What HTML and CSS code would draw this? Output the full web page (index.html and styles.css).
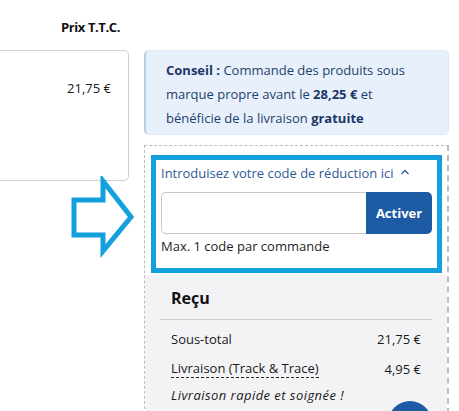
FILE: index.html
```html
<!DOCTYPE html>
<html lang="fr">
<head>
<meta charset="utf-8">
<link rel="stylesheet" href="styles.css">
</head>
<body>
<div class="page">
  <div class="cart">
    <div class="cart-head">Prix T.T.C.</div>
    <div class="cart-card">
      <div class="price">21,75 €</div>
    </div>
  </div>
  <div class="side">
    <div class="tip">
      <p class="tip-text"><b>Conseil :</b> Commande des produits sous<br>marque propre avant le <b>28,25&nbsp;€</b> et<br>bénéficie de la livraison <b>gratuite</b></p>
    </div>
    <div class="summary">
      <div class="discount">
        <div class="highlight">
          <div class="toggle">Introduisez votre code de réduction ici
            <svg class="chev" width="10" height="6" viewBox="0 0 10 6"><path d="M1.5 5 L5 1.5 L8.5 5" fill="none" stroke="#2d5c95" stroke-width="1.3"/></svg>
          </div>
          <div class="code-row">
            <input class="code-input" type="text" aria-label="code">
            <button class="code-btn">Activer</button>
          </div>
          <div class="hint">Max. 1 code par commande</div>
        </div>
      </div>
      <div class="receipt">
        <div class="receipt-title">Reçu</div>
        <div class="row"><span>Sous-total</span><span>21,75 €</span></div>
        <div class="row row-ship"><span class="dotted">Livraison (Track &amp; Trace)</span><span>4,95 €</span></div>
        <div class="note">Livraison rapide et soignée !</div>
        <div class="circle-wrap"><div class="circle"></div></div>
      </div>
    </div>
  </div>
  <svg class="arrow" width="72" height="84" viewBox="0 0 72 84">
    <path d="M6 24 L35 24 L35 5 L63 41 L35 75 L35 59 L6 59 Z" fill="none" stroke="#13a0dc" stroke-width="5" stroke-linejoin="miter"/>
  </svg>
</div>
</body>
</html>
```
FILE: styles.css
```css
html, body {
  margin: 0;
  padding: 0;
  background: #fff;
  font-family: "Open Sans", "Noto Sans", sans-serif;
  color: #1a1a1a;
  overflow: hidden;
}
.page {
  position: relative;
  display: flex;
  gap: 15px;
  width: 459px;
  height: 411px;
  overflow: hidden;
}
.cart {
  width: 129px;
  flex: none;
}
.cart-head {
  height: 50px;
  box-sizing: border-box;
  padding: 18px 9px 0 0;
  text-align: right;
  font-weight: 700;
  font-size: 13px;
  letter-spacing: -0.4px;
  line-height: 18px;
  color: #111;
}
.cart-card {
  height: 131px;
  box-sizing: border-box;
  border: 1px solid #cfcfcf;
  border-left: none;
  border-radius: 0 5px 5px 0;
  padding: 28px 17px 0 0;
  text-align: right;
  font-size: 13px;
  line-height: 18px;
}
.side {
  width: 305px;
  flex: none;
  padding-top: 50px;
}
.tip {
  height: 85px;
  box-sizing: border-box;
  background: #e8f0fb;
  border: 1px solid #dfe8f5;
  border-left: 2px solid #b9cfe9;
  border-radius: 5px;
  padding: 7px 20px 0 20px;
  color: #1f3f6e;
}
.tip-text {
  margin: 0;
  font-size: 13px;
  line-height: 24px;
  white-space: nowrap;
}
.tip b {
  color: #1b3766;
}
.summary {
  margin-top: 10px;
  border: 1px dashed #bdbdbd;
  border-right-width: 2px;
}
.discount {
  background: #fff;
  padding: 9px 5px 2px 6px;
}
.highlight {
  border: 5px solid #13a0dc;
  padding: 4px 5px 13px 5px;
}
.toggle {
  font-size: 13px;
  line-height: 18px;
  color: #2d5c95;
  display: flex;
  align-items: center;
}
.chev {
  margin-left: 7px;
  margin-top: -2px;
}
.code-row {
  display: flex;
  margin-top: 10px;
  height: 42px;
}
.code-input {
  flex: 1;
  min-width: 0;
  box-sizing: border-box;
  border: 1px solid #c8c8c8;
  border-right: none;
  border-radius: 5px 0 0 5px;
  margin: 0;
  padding: 0 8px;
  font: inherit;
  background: #fff;
}
.code-btn {
  width: 66px;
  flex: none;
  border: none;
  margin: 0;
  background: #1d5ba5;
  color: #fff;
  font-family: "Open Sans", sans-serif;
  font-weight: 700;
  font-size: 13px;
  border-radius: 0 5px 5px 0;
  padding: 0;
}
.hint {
  margin-top: 3px;
  font-size: 13px;
  line-height: 18px;
  color: #1e1e1e;
}
.receipt {
  background: #f3f3f6;
  padding: 12px 15px 0 15px;
  height: 136px;
}
.receipt-title {
  font-weight: 700;
  font-size: 16px;
  line-height: 22px;
  padding: 0 11px 10px;
  border-bottom: 1px solid #c9c9cc;
  color: #111;
}
.row {
  display: flex;
  justify-content: space-between;
  padding: 0 11px;
  font-size: 13px;
  line-height: 18px;
  margin-top: 10px;
}
.row-ship {
  margin-top: 12px;
}
.dotted {
  border-bottom: 1px dashed #222;
  line-height: 17px;
}
.note {
  padding: 0 11px;
  font-style: italic;
  font-size: 13px;
  letter-spacing: 0.45px;
  line-height: 18px;
  margin-top: 8px;
}
.circle-wrap {
  display: flex;
  justify-content: flex-end;
  margin-top: -3px;
}
.circle {
  width: 44px;
  height: 44px;
  border-radius: 50%;
  background: #1d5ba5;
}
.arrow {
  position: absolute;
  left: 68px;
  top: 176px;
}
```
